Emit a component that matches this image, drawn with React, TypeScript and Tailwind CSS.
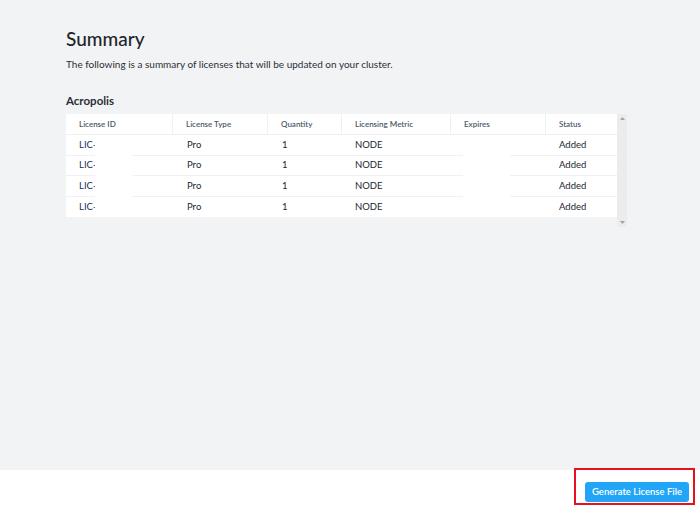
import React from 'react';

const columns = [
  { label: 'License ID', width: 'w-[107px]' },
  { label: 'License Type', width: 'w-[95px]' },
  { label: 'Quantity', width: 'w-[74px]' },
  { label: 'Licensing Metric', width: 'w-[109px]' },
  { label: 'Expires', width: 'w-[95px]' },
  { label: 'Status', width: 'w-[71px]' },
];

const rows = [
  { id: 'LIC-0', type: 'Pro', qty: '1', metric: 'NODE', expires: '', status: 'Added' },
  { id: 'LIC-0', type: 'Pro', qty: '1', metric: 'NODE', expires: '', status: 'Added' },
  { id: 'LIC-0', type: 'Pro', qty: '1', metric: 'NODE', expires: '', status: 'Added' },
  { id: 'LIC-0', type: 'Pro', qty: '1', metric: 'NODE', expires: '', status: 'Added' },
];

const App = () => {
  return (
    <div className="flex flex-col h-[513px] w-[700px] font-['Lato','Open_Sans',sans-serif] text-[#22272e]">
      <main className="flex-1 bg-[#f2f3f5] pl-[66px] pt-[27px]">
        <h1 className="text-[19px] leading-[24px] font-medium text-[#1f242b]">Summary</h1>
        <p className="mt-[6px] text-[10px] text-[#2a2f36]">
          The following is a summary of licenses that will be updated on your cluster.
        </p>
        <h2 className="mt-[20px] text-[11.5px] font-bold text-[#2a2f36]">Acropolis</h2>

        <div className="mt-[5px] flex h-[113px]">
          <div className="relative w-[551px] self-start bg-white">
            <div className="flex h-[21px] items-center border-b border-[#eef0f2]">
              {columns.map((col, i) => (
                <div
                  key={col.label}
                  className={`${col.width} h-full flex items-center pl-[13px] text-[8px] font-semibold text-[#4b5867] ${
                    i < columns.length - 1 ? 'border-r border-[#eef0f2]' : ''
                  }`}
                >
                  {col.label}
                </div>
              ))}
            </div>
            {rows.map((row, i) => (
              <div
                key={i}
                className={`flex h-[20.5px] items-center text-[9.5px] ${
                  i < rows.length - 1 ? 'border-b border-[#eef0f2]' : ''
                }`}
              >
                <div className="w-[107px] pl-[13px] text-[#1b2f55]">{row.id}</div>
                <div className="w-[95px] pl-[14px]">{row.type}</div>
                <div className="w-[74px] pl-[14px]">{row.qty}</div>
                <div className="w-[109px] pl-[13px]">{row.metric}</div>
                <div className="w-[95px] pl-[13px]">{row.expires}</div>
                <div className="w-[71px] pl-[13px]">{row.status}</div>
              </div>
            ))}
            {/* redacted blocks */}
            <div className="absolute left-[29px] top-[22px] h-[81px] w-[38px] bg-white" />
            <div className="absolute left-[397px] top-[22px] h-[81px] w-[47px] bg-white" />
          </div>
          <div className="flex w-[10px] flex-col items-center justify-between bg-[#ececec] py-[3px]">
            <svg width="5" height="3" viewBox="0 0 5 3">
              <path d="M0 3 L2.5 0 L5 3 Z" fill="#a3a3a3" />
            </svg>
            <svg width="5" height="3" viewBox="0 0 5 3">
              <path d="M0 0 L2.5 3 L5 0 Z" fill="#a3a3a3" />
            </svg>
          </div>
        </div>
      </main>
      <footer className="flex h-[43px] items-start justify-end bg-white pr-[5px]">
        <div className="-mt-[2px] border-2 border-[#e8101f] pl-[9px] pr-[4px] pt-[12px] pb-[1px]">
          <button className="block h-[20px] w-[104px] rounded-[3px] bg-[#22a5f7] text-[9.5px] font-semibold text-white">
            Generate License File
          </button>
        </div>
      </footer>
    </div>
  );
};

export default App;
